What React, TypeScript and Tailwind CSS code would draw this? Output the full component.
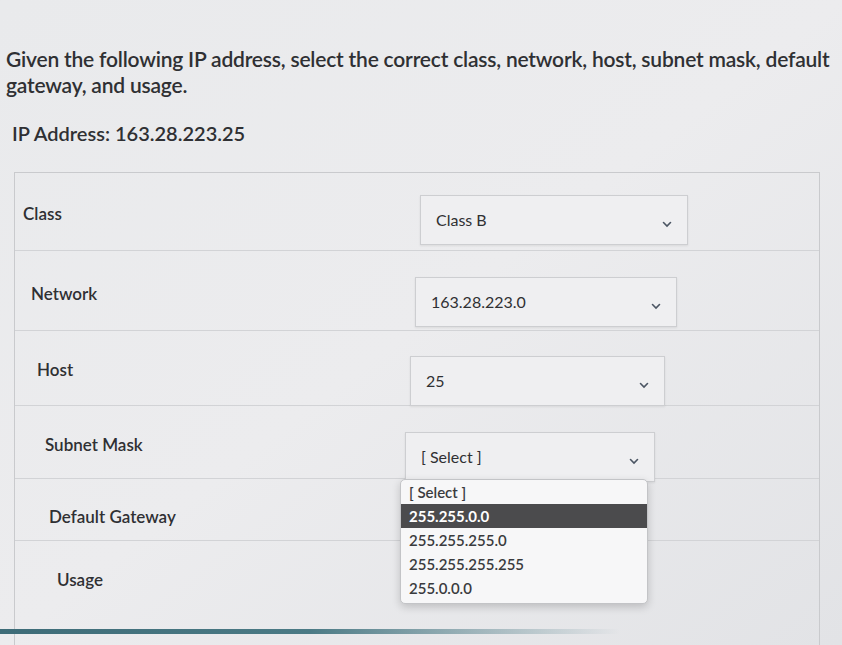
import * as React from 'react';

const ROWS = [
  { label: 'Class', value: 'Class B', row: 'h-[78px]', lab: 'w-[405px] pl-[8px] pt-[28px]', sel: 'w-[268px] pt-[22px]' },
  { label: 'Network', value: '163.28.223.0', row: 'h-[80px]', lab: 'w-[400px] pl-[16px] pt-[30px]', sel: 'w-[262px] pt-[26px]' },
  { label: 'Host', value: '25', row: 'h-[75px]', lab: 'w-[395px] pl-[22px] pt-[26px]', sel: 'w-[255px] pt-[25px]' },
  { label: 'Subnet Mask', value: '[ Select ]', row: 'h-[73px]', lab: 'w-[390px] pl-[30px] pt-[26px]', sel: 'w-[250px] pt-[26px]' },
];

const OPTIONS = ['[ Select ]', '255.255.0.0', '255.255.255.0', '255.255.255.255', '255.0.0.0'];

function Chevron() {
  return (
    <svg width="10" height="7" viewBox="0 0 10 7" className="mt-[8px] shrink-0">
      <path d="M1.5 1.5 L5 5 L8.5 1.5" fill="none" stroke="#4b5563" strokeWidth="1.6" strokeLinecap="round" />
    </svg>
  );
}

export default function App() {
  return (
    <div
      className="relative h-[645px] w-[842px] overflow-hidden bg-gradient-to-br from-[#e9eaec] via-[#ececee] to-[#e2e3e6] text-[#2f3033]"
      style={{ fontFamily: 'Lato, "Open Sans", sans-serif' }}
    >
      <div className="px-[6px] pt-[46px]">
        <p className="text-[21px] leading-[26px] font-semibold tracking-[-0.2px]">
          Given the following IP address, select the correct class, network, host, subnet mask, default
          gateway, and usage.
        </p>
        <p className="mt-[20px] pl-[6px] text-[20px] font-semibold">IP Address: 163.28.223.25</p>
      </div>

      <div className="mt-[24px] ml-[14px] mr-[22px] border-t border-l border-r border-[#c9cacd] pb-[40px]">
        {ROWS.map((r) => (
          <div key={r.label} className={`flex border-b border-[#d2d3d6] ${r.row}`}>
            <div className={`shrink-0 ${r.lab} text-[17px] font-semibold whitespace-nowrap`}>{r.label}</div>
            <div className={`${r.sel} shrink-0`}>
              <div className="flex h-[50px] items-center justify-between border border-[#cdced1] bg-[#efeff1] px-[15px] text-[16px] shadow-[0_1px_2px_rgba(0,0,0,0.08)]">
                <span>{r.value}</span>
                <Chevron />
              </div>
            </div>
          </div>
        ))}

        <div className="relative flex h-[62px] border-b border-[#d2d3d6]">
          <div className="pl-[34px] pt-[25px] text-[17px] font-semibold">Default Gateway</div>
          <div className="absolute left-[385px] top-[0px] z-10 w-[248px] overflow-hidden rounded-[5px] border border-[#c3c4c7] bg-[#f7f7f8] pb-[3px] text-[15px] shadow-[0_3px_8px_rgba(0,0,0,0.18)]">
            {OPTIONS.map((o, i) => (
              <div
                key={o}
                className={
                  i === 1
                    ? 'bg-[#4b4b4d] px-[8px] leading-[24px] font-bold text-white'
                    : 'px-[8px] leading-[24px] font-semibold text-[#3a3b3e]'
                }
              >
                {o}
              </div>
            ))}
          </div>
        </div>

        <div className="flex h-[70px]">
          <div className="pl-[42px] pt-[26px] text-[17px] font-semibold">Usage</div>
        </div>
      </div>

      <div className="absolute bottom-[11px] left-0 h-[5px] w-[620px] bg-gradient-to-r from-[#3e6c78] via-[#4b7a85] to-transparent" />
    </div>
  );
}
